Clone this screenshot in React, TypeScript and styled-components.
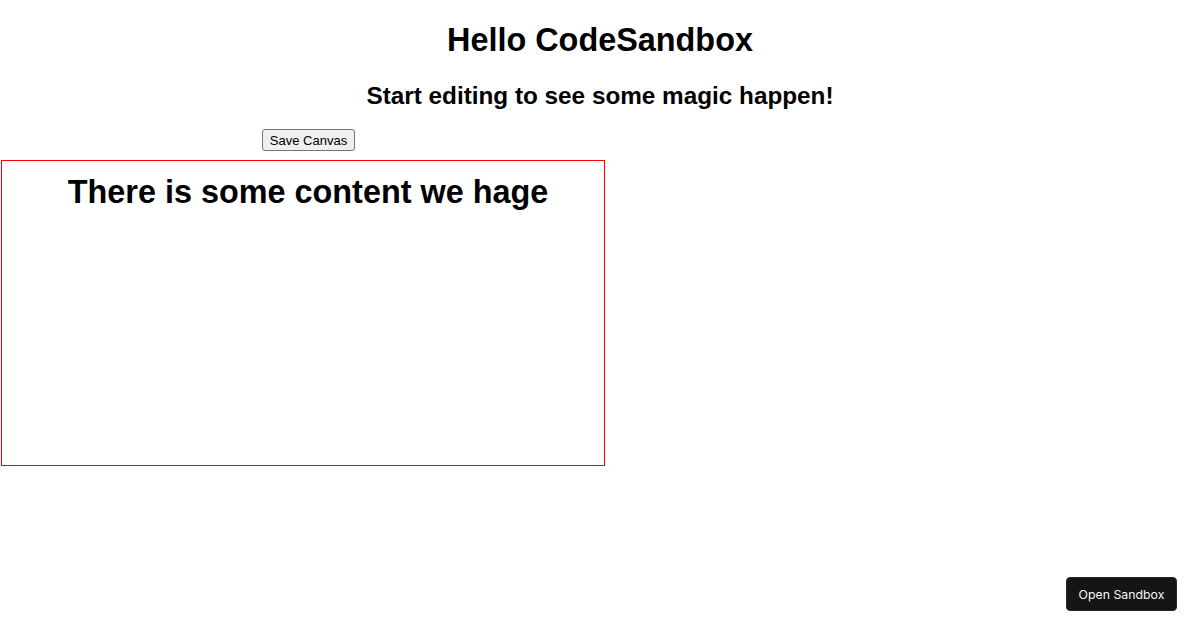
import React from 'react';
import styled, { createGlobalStyle } from 'styled-components';

const GlobalStyle = createGlobalStyle`
  html, body {
    margin: 0;
    padding: 0;
    background: #fff;
  }
`;

const Page = styled.div`
  font-family: 'Liberation Sans', Arial, sans-serif;
  text-align: center;
  color: #000;
`;

const Title = styled.h1`
  font-size: 32.4px;
  font-weight: 700;
  margin: 22px 0 0;
  line-height: 37px;
`;

const Subtitle = styled.h2`
  font-size: 24.3px;
  font-weight: 700;
  margin: 23px 0 0;
  line-height: 28px;
`;

const Toolbar = styled.div`
  width: 604px;
  margin: 19px 0 0 1px;
  display: flex;
  justify-content: center;
  padding-left: 11px;
  box-sizing: border-box;
`;

const SaveButton = styled.button`
  font-family: 'Liberation Sans', Arial, sans-serif;
  font-size: 13px;
  height: 22px;
  padding: 1px 7px;
  color: #000;
  background: #efefef;
  border: 1px solid #767676;
  border-radius: 3px;
`;

const CanvasBox = styled.div`
  box-sizing: border-box;
  width: 604px;
  height: 306px;
  margin: 9px 0 0 1px;
  padding-left: 10px;
  border: 1px solid red;
  text-align: center;
`;

const CanvasHeading = styled.h1`
  font-size: 32.4px;
  font-weight: 700;
  margin: 13px 0 0;
  line-height: 37px;
`;

const OpenSandbox = styled.a`
  position: fixed;
  right: 23px;
  bottom: 19px;
  width: 111px;
  height: 34px;
  display: flex;
  align-items: center;
  justify-content: center;
  box-sizing: border-box;
  background: #151515;
  color: #f5f5f5;
  border-radius: 4px;
  font-family: Inter, 'Liberation Sans', sans-serif;
  font-size: 12.3px;
  text-decoration: none;
  border: 1px solid #2a2a2a;
`;

export default function App() {
  return (
    <Page>
      <GlobalStyle />
      <Title>Hello CodeSandbox</Title>
      <Subtitle>Start editing to see some magic happen!</Subtitle>
      <Toolbar>
        <SaveButton>Save Canvas</SaveButton>
      </Toolbar>
      <CanvasBox>
        <CanvasHeading>There is some content we hage</CanvasHeading>
      </CanvasBox>
      <OpenSandbox href="#">Open Sandbox</OpenSandbox>
    </Page>
  );
}
